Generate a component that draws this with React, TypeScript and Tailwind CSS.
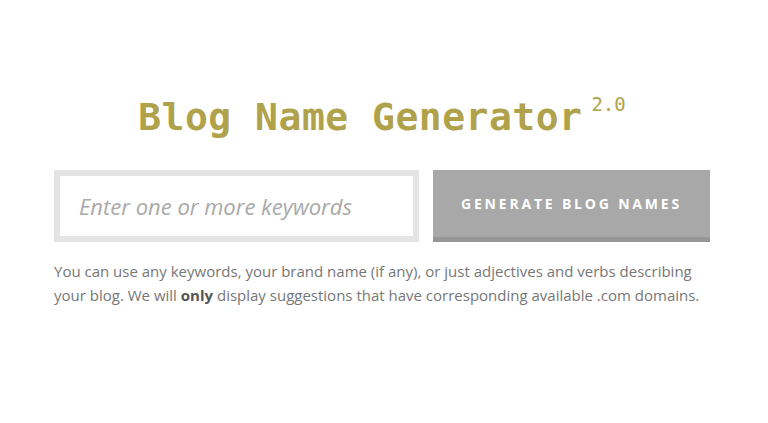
import React, { useState } from 'react'

const App = () => {
  const [keywords, setKeywords] = useState('')

  return (
    <div className="w-full min-h-[423px] bg-white">
      <div className="w-[656px] ml-[54px] pt-[89px]">
        <h1 className="text-center font-bold text-[#b0a24a] text-[38px] leading-[56px] font-['DejaVu_Sans_Mono',monospace] tracking-[0.5px]">
          Blog Name Generator
          <sup className="text-[19px] ml-[9px] top-[-1em] font-normal tracking-normal">2.0</sup>
        </h1>

        <form className="flex mt-[25px]" onSubmit={(e) => e.preventDefault()}>
          <input
            value={keywords}
            onChange={(e) => setKeywords(e.target.value)}
            placeholder="Enter one or more keywords"
            className="w-[365px] h-[72px] border-[6px] border-[#e4e4e4] px-[19px] text-[22px] italic text-[#666] placeholder:text-[#a9a9a9] outline-none font-['Open_Sans',sans-serif]"
          />
          <button
            type="submit"
            className="ml-[14px] flex-1 h-[72px] bg-[#a8a8a8] border-b-[5px] border-[#969696] text-white font-bold text-[14px] tracking-[0.2em] font-['Open_Sans',sans-serif]"
          >
            GENERATE BLOG NAMES
          </button>
        </form>

        <p className="mt-[17px] text-[15px] leading-[24px] text-[#777] font-['Open_Sans',sans-serif]">
          You can use any keywords, your brand name (if any), or just adjectives and verbs describing
          your blog. We will <strong className="text-[#555]">only</strong> display suggestions that have corresponding available .com domains.
        </p>
      </div>
    </div>
  )
}

export default App
